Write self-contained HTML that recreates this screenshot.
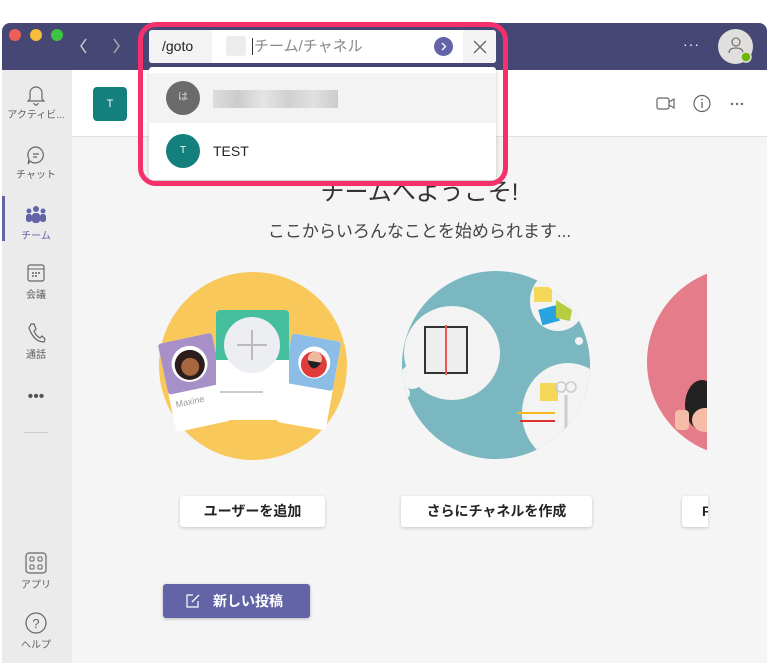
<!DOCTYPE html>
<html><head><meta charset="utf-8"><style>
*{margin:0;padding:0;box-sizing:border-box}
body{width:768px;height:656px;background:#fff;position:relative;overflow:hidden;font-family:"Liberation Sans","Noto Sans CJK JP",sans-serif;color:#252423}
.a{position:absolute}
.lbl{position:absolute;width:72px;text-align:center;font-size:10px;color:#616161}
.btn{position:absolute;background:#fff;border-radius:3px;box-shadow:0 1px 3px rgba(0,0,0,.2);font-size:14px;font-weight:bold;text-align:center;line-height:31px;height:31px}
</style></head><body>
<div class="a" style="left:2px;top:23px;width:765px;height:640px;background:#f5f5f5;border-radius:8px 8px 0 0;overflow:hidden">
 <div class="a" style="left:0;top:0;width:765px;height:47px;background:#464775"></div>
 <div class="a" style="left:0;top:47px;width:70px;height:600px;background:#ebebeb"></div>
 <div class="a" style="left:70px;top:47px;width:695px;height:67px;background:#fff;border-bottom:1px solid #e0e0e0"></div>
</div>
<div class="a" style="left:9px;top:29px;width:12px;height:12px;border-radius:50%;background:#ed5f57"></div>
<div class="a" style="left:30px;top:29px;width:12px;height:12px;border-radius:50%;background:#f6bd3b"></div>
<div class="a" style="left:51px;top:29px;width:12px;height:12px;border-radius:50%;background:#3ec443"></div>
<svg class="a" style="left:78px;top:36px" width="50" height="20"><path d="M8 3 L3 10 L8 17" stroke="#ccc" stroke-width="1.5" fill="none"/><path d="M36 3 L41 10 L36 17" stroke="#aaa" stroke-width="1.5" fill="none"/></svg>
<div class="a" style="left:683px;top:36px;color:#fff;font-size:14px;letter-spacing:1px">···</div>
<div class="a" style="left:718px;top:29px;width:35px;height:35px;border-radius:50%;background:#e1dfdd"></div>
<svg class="a" style="left:718px;top:29px" width="36" height="36"><circle cx="18" cy="13" r="4" stroke="#777" fill="none" stroke-width="1.3"/><path d="M11 24 Q11 19 18 19 Q25 19 25 24" stroke="#777" fill="none" stroke-width="1.3"/><circle cx="28" cy="28" r="5" fill="#6bb700" stroke="#e1dfdd" stroke-width="1.5"/></svg>
<svg class="a" style="left:26px;top:84px" width="20" height="22"><path d="M4 15 V9 a6 6 0 0 1 12 0 V15 L18 17 H2 Z M8 19 a2 2 0 0 0 4 0" stroke="#666" fill="none" stroke-width="1.2"/></svg>
<div class="lbl" style="top:106px;left:0">アクティビ...</div>
<svg class="a" style="left:26px;top:145px" width="20" height="22"><path d="M10 2 a8 8 0 1 1 -6 14 L2 19 L3 14 A8 8 0 0 1 10 2Z M7 9 H13 M7 12 H11" stroke="#666" fill="none" stroke-width="1.2"/></svg>
<div class="lbl" style="top:166px;left:0">チャット</div>
<div class="a" style="left:2px;top:196px;width:3px;height:45px;background:#6264a7"></div>
<svg class="a" style="left:25px;top:205px" width="22" height="20"><circle cx="11" cy="4" r="3" fill="#6264a7"/><circle cx="4" cy="6" r="2.5" fill="#6264a7"/><circle cx="18" cy="6" r="2.5" fill="#6264a7"/><rect x="7" y="8" width="8" height="10" rx="3" fill="#6264a7"/><rect x="1" y="9" width="6" height="8" rx="2.5" fill="#6264a7"/><rect x="15" y="9" width="6" height="8" rx="2.5" fill="#6264a7"/></svg>
<div class="lbl" style="top:227px;left:0;color:#6264a7">チーム</div>
<svg class="a" style="left:26px;top:263px" width="20" height="20"><rect x="2" y="2" width="16" height="16" rx="2" stroke="#666" fill="none" stroke-width="1.2"/><path d="M2 6 H18" stroke="#666"/><g fill="#666"><circle cx="7" cy="10" r="1"/><circle cx="10" cy="10" r="1"/><circle cx="13" cy="10" r="1"/><circle cx="7" cy="13" r="1"/><circle cx="10" cy="13" r="1"/></g></svg>
<div class="lbl" style="top:286px;left:0">会議</div>
<svg class="a" style="left:26px;top:322px" width="20" height="22"><path d="M5 2 L8 2 L10 7 L8 9 Q10 14 14 16 L16 14 L19 17 L18 20 Q8 20 3 6 Z" stroke="#666" fill="none" stroke-width="1.2"/></svg>
<div class="lbl" style="top:346px;left:0">通話</div>
<div class="lbl" style="top:388px;font-size:16px;color:#555">•••</div>
<div class="a" style="left:24px;top:432px;width:24px;height:1px;background:#ccc"></div>
<svg class="a" style="left:25px;top:552px" width="22" height="22"><rect x="1" y="1" width="20" height="20" rx="3" stroke="#666" fill="none" stroke-width="1.2"/><rect x="5" y="5" width="4" height="4" rx="1" stroke="#666" fill="none"/><rect x="13" y="5" width="4" height="4" rx="1" stroke="#666" fill="none"/><rect x="5" y="13" width="4" height="4" rx="1" stroke="#666" fill="none"/><rect x="13" y="13" width="4" height="4" rx="1" stroke="#666" fill="none"/></svg>
<div class="lbl" style="top:576px;left:0">アプリ</div>
<svg class="a" style="left:25px;top:612px" width="22" height="22"><circle cx="11" cy="11" r="10" stroke="#666" fill="none" stroke-width="1.2"/><text x="11" y="16" font-size="13" text-anchor="middle" fill="#666" font-family="Liberation Sans">?</text></svg>
<div class="lbl" style="top:636px;left:0">ヘルプ</div>
<div class="a" style="left:93px;top:87px;width:34px;height:34px;border-radius:4px;background:#13807d;color:#fff;font-size:11px;text-align:center;line-height:34px">T</div>
<svg class="a" style="left:655px;top:94px" width="100" height="20"><rect x="2" y="4" width="12" height="11" rx="2" stroke="#666" fill="none" stroke-width="1.2"/><path d="M14 8 L19 5 V14 L14 11" stroke="#666" fill="none" stroke-width="1.2"/><circle cx="47" cy="9.5" r="8" stroke="#666" fill="none" stroke-width="1.2"/><path d="M47 8 V14" stroke="#666" stroke-width="1.3"/><circle cx="47" cy="5.5" r="0.9" fill="#666"/><g fill="#666"><circle cx="77" cy="10" r="1.2"/><circle cx="82" cy="10" r="1.2"/><circle cx="87" cy="10" r="1.2"/></g></svg>
<div class="a" style="left:72px;top:172px;width:695px;text-align:center;font-size:24px;color:#333">チームへようこそ!</div>
<div class="a" style="left:72px;top:217px;width:695px;text-align:center;font-size:17px;color:#444">ここからいろんなことを始められます...</div>
<svg class="a" style="left:150px;top:265px" width="560" height="200">
 <circle cx="103" cy="101" r="94" fill="#f9c85a"/>
 <g transform="rotate(-12 45 110)"><rect x="15" y="72" width="55" height="90" rx="3" fill="#fff"/><rect x="15" y="72" width="55" height="52" rx="3" fill="#a790c8"/><circle cx="42" cy="98" r="18" fill="#fff"/><circle cx="42" cy="99" r="15" fill="#2b1d1b"/><circle cx="42" cy="101" r="9" fill="#a8663f"/><text x="20" y="138" font-size="9" fill="#999">Maxine</text></g>
 <g transform="rotate(10 160 110)"><rect x="135" y="72" width="50" height="90" rx="3" fill="#fff"/><rect x="135" y="72" width="50" height="50" rx="3" fill="#8cbde6"/><circle cx="162" cy="97" r="16" fill="#fff"/><circle cx="162" cy="99" r="13" fill="#e03c3c"/><circle cx="162" cy="93" r="7" fill="#f3b9a0"/><path d="M155 96 Q162 110 169 96" fill="#222"/></g>
 <rect x="66" y="45" width="73" height="110" rx="4" fill="#fff"/>
 <path d="M70 45 H135 a4 4 0 0 1 4 4 V95 H66 V49 a4 4 0 0 1 4 -4Z" fill="#45bf9d"/>
 <circle cx="102" cy="80" r="28" fill="#edeef2"/>
 <path d="M102 65 V95 M87 80 H117" stroke="#bbb" stroke-width="2"/>
 <path d="M70 127 H113" stroke="#ccc" stroke-width="2"/>
 <clipPath id="t"><circle cx="346" cy="100" r="94"/></clipPath>
 <circle cx="346" cy="100" r="94" fill="#7ab7c0"/>
 <g clip-path="url(#t)">
 <ellipse cx="302" cy="88" rx="48" ry="47" fill="#f3f3f3"/>
 <circle cx="262" cy="112" r="12" fill="#f3f3f3"/><circle cx="254" cy="128" r="6" fill="#f3f3f3"/>
 <rect x="275" y="62" width="42" height="46" fill="#eee" stroke="#333" stroke-width="2"/><path d="M296 60 V110" stroke="#e55" stroke-width="2"/>
 <ellipse cx="408" cy="36" rx="28" ry="30" fill="#f3f3f3"/>
 <rect x="384" y="22" width="18" height="15" fill="#f5d85a"/><rect x="390" y="42" width="18" height="16" fill="#29a3e0" transform="rotate(-15 400 50)"/><path d="M406 35 L422 45 L420 56 L406 53Z" fill="#b8cc3f"/>
 <circle cx="429" cy="76" r="4" fill="#f3f3f3"/>
 <ellipse cx="418" cy="148" rx="46" ry="50" fill="#f3f3f3"/>
 <rect x="390" y="118" width="18" height="18" fill="#f5d85a"/><path d="M367 148 H405" stroke="#f5b820" stroke-width="2"/><path d="M370 156 H405" stroke="#d33" stroke-width="2"/><path d="M416 130 V165" stroke="#ccc" stroke-width="3"/><circle cx="411" cy="122" r="5" fill="none" stroke="#ccc" stroke-width="1.5"/><circle cx="421" cy="122" r="5" fill="none" stroke="#ccc" stroke-width="1.5"/>
 </g>
 <clipPath id="c"><rect x="490" y="0" width="67" height="200"/></clipPath>
 <g clip-path="url(#c)"><circle cx="592" cy="97" r="95" fill="#e57c8a"/><ellipse cx="552" cy="140" rx="17" ry="25" fill="#222"/><ellipse cx="555" cy="155" rx="13" ry="12" fill="#f5bca8"/><rect x="525" y="145" width="14" height="20" rx="4" fill="#f5bca8"/></g>
</svg>
<div class="btn" style="left:180px;top:496px;width:145px">ユーザーを追加</div>
<div class="btn" style="left:401px;top:496px;width:191px">さらにチャネルを作成</div>
<div class="btn" style="left:682px;top:496px;width:26px;text-align:left;padding-left:20px;overflow:hidden;border-radius:3px 0 0 3px">F</div>
<div class="a" style="left:163px;top:584px;width:147px;height:34px;background:#6264a7;border-radius:3px;box-shadow:0 1px 3px rgba(0,0,0,.25);color:#fff;font-size:14px;font-weight:bold;line-height:34px;padding-left:50px">新しい投稿</div>
<svg class="a" style="left:184px;top:592px" width="18" height="18"><path d="M9 3 H3 V15 H14 V9" stroke="#fff" fill="none" stroke-width="1.2"/><path d="M8 10 L15 3" stroke="#fff" stroke-width="1.3"/></svg>
<div class="a" style="left:149px;top:67px;width:347px;height:113px;background:#fff;box-shadow:0 2px 6px rgba(0,0,0,.2);border-radius:3px"></div>
<div class="a" style="left:149px;top:73px;width:347px;height:50px;background:#f3f3f3"></div>
<div class="a" style="left:166px;top:81px;width:34px;height:34px;border-radius:50%;background:#6b6b6b;color:#ddd;font-size:10px;text-align:center;line-height:34px">は</div>
<div class="a" style="left:213px;top:90px;width:125px;height:18px;background:linear-gradient(90deg,#ddd,#ccc 20%,#e5e5e5 40%,#d0d0d0 60%,#e0e0e0 80%,#ccc)"></div>
<div class="a" style="left:166px;top:134px;width:34px;height:34px;border-radius:50%;background:#13807d;color:#fff;font-size:10px;text-align:center;line-height:34px">T</div>
<div class="a" style="left:213px;top:143px;font-size:14px">TEST</div>
<div class="a" style="left:149px;top:30px;width:347px;height:33px;background:#fff;border-radius:3px;overflow:hidden">
 <div class="a" style="left:0;top:0;width:63px;height:33px;background:#f3f3f3;font-size:14px;line-height:33px;padding-left:13px;color:#222">/goto</div>
 <div class="a" style="left:77px;top:6px;width:20px;height:20px;border-radius:3px;background:#ececec"></div>
 <div class="a" style="left:103px;top:8px;width:1px;height:17px;background:#333"></div>
 <div class="a" style="left:105px;top:0;font-size:15px;line-height:33px;color:#888">チーム/チャネル</div>
 <div class="a" style="left:285px;top:7px;width:19px;height:19px;border-radius:50%;background:#6264a7"></div>
 <svg class="a" style="left:285px;top:7px" width="19" height="19"><path d="M8 6 L11.5 9.5 L8 13" stroke="#fff" fill="none" stroke-width="1.3"/></svg>
 <div class="a" style="left:314px;top:0;width:33px;height:33px;background:#f3f3f3"></div>
 <svg class="a" style="left:324px;top:10px" width="14" height="14"><path d="M1 1 L13 13 M13 1 L1 13" stroke="#666" stroke-width="1.3"/></svg>
</div>
<div class="a" style="left:138px;top:22px;width:370px;height:164px;border:5px solid #f5306b;border-radius:18px"></div>
</body></html>
